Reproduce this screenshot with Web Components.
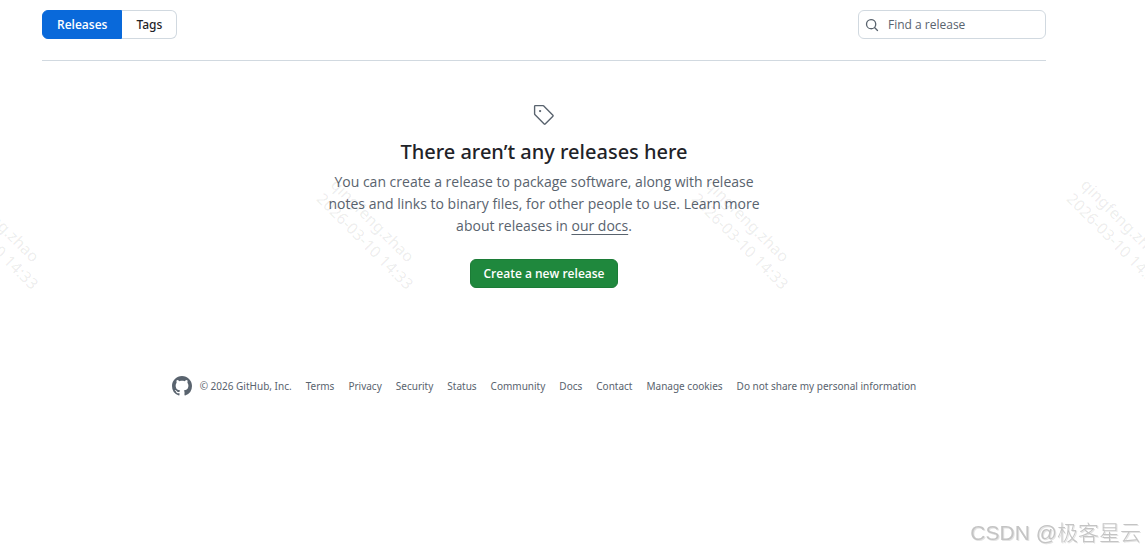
<!DOCTYPE html>
<html lang="en">
<head>
<meta charset="utf-8">
<meta name="viewport" content="width=device-width, initial-scale=1">
<title>Releases</title>
<style>
  body {
    --font-medium: "Noto Sans", sans-serif;
    margin: 0;
    background: #fff;
    color: #1f2328;
    font-family: "Open Sans", "Noto Sans", sans-serif;
    font-size: 12px;
  }
</style>
</head>
<body>
<releases-page>
  <releases-toolbar slot="toolbar"></releases-toolbar>
  <blank-slate>
    <span slot="heading">There aren’t any releases here</span>
    You can create a release to package software, along with release notes and links to binary files, for other people to use. Learn more about releases in <a href="#docs">our docs</a>.
    <span slot="action">Create a new release</span>
  </blank-slate>
  <site-footer slot="footer">
    <footer-link href="#terms">Terms</footer-link>
    <footer-link href="#privacy">Privacy</footer-link>
    <footer-link href="#security">Security</footer-link>
    <footer-link href="#status">Status</footer-link>
    <footer-link href="#community">Community</footer-link>
    <footer-link href="#docs">Docs</footer-link>
    <footer-link href="#contact">Contact</footer-link>
    <footer-link href="#cookies">Manage cookies</footer-link>
    <footer-link href="#share">Do not share my personal information</footer-link>
  </site-footer>
</releases-page>
<user-watermark name="qingfeng.zhao" time="2026-03-10 14:33"></user-watermark>
<image-credit>CSDN @极客星云</image-credit>

<script>
class ReleasesPage extends HTMLElement {
  constructor() {
    super();
    this.attachShadow({ mode: 'open' });
    this.shadowRoot.innerHTML = `
      <style>
        :host {
          display: block;
          padding: 10px 99px 0 42px;
        }
      </style>
      <slot name="toolbar"></slot>
      <main><slot></slot></main>
      <slot name="footer"></slot>
    `;
  }
}

class ReleasesToolbar extends HTMLElement {
  constructor() {
    super();
    this.attachShadow({ mode: 'open' });
    this.shadowRoot.innerHTML = `
      <style>
        :host {
          display: flex;
          justify-content: space-between;
          padding-bottom: 21px;
          border-bottom: 1px solid #d1d9e0;
        }
        nav {
          display: flex;
        }
        a {
          box-sizing: border-box;
          height: 29px;
          padding: 0 14px;
          border: 1px solid #d1d9e0;
          border-radius: 0 6px 6px 0;
          border-left: 0;
          color: #1f2328;
          font-family: var(--font-medium);
          font-weight: 500;
          line-height: 27px;
          text-decoration: none;
        }
        a[aria-current] {
          border: 1px solid #0969da;
          border-radius: 6px 0 0 6px;
          background: #0969da;
          color: #fff;
          font-family: inherit;
          font-weight: 600;
        }
        label {
          display: flex;
          align-items: center;
          gap: 9px;
          box-sizing: border-box;
          width: 188px;
          height: 29px;
          padding: 0 6px;
          border: 1px solid #d1d9e0;
          border-radius: 6px;
        }
        svg {
          flex: none;
          fill: #59636e;
        }
        input {
          flex: 1;
          min-width: 0;
          padding: 0;
          border: 0;
          outline: 0;
          background: none;
          color: inherit;
          font: inherit;
        }
        input::placeholder {
          color: #59636e;
          opacity: 1;
        }
      </style>
      <nav aria-label="Releases and tags">
        <a href="#releases" aria-current="page">Releases</a>
        <a href="#tags">Tags</a>
      </nav>
      <label>
        <svg width="14" height="14" viewBox="0 0 16 16" aria-hidden="true">
          <path d="M10.68 11.74a6 6 0 0 1-7.922-8.982 6 6 0 0 1 8.982 7.922l3.04 3.04a.749.749 0 0 1-.326 1.275.749.749 0 0 1-.734-.215ZM11.5 7a4.499 4.499 0 1 0-8.997 0A4.499 4.499 0 0 0 11.5 7Z"/>
        </svg>
        <input type="text" placeholder="Find a release" aria-label="Find a release">
      </label>
    `;
  }
}

class BlankSlate extends HTMLElement {
  constructor() {
    super();
    this.attachShadow({ mode: 'open' });
    this.shadowRoot.innerHTML = `
      <style>
        :host {
          display: flex;
          flex-direction: column;
          align-items: center;
          padding: 43px 28px 88px;
          text-align: center;
        }
        svg {
          fill: #59636e;
        }
        h2 {
          margin: 10px 0 3px;
          font-family: var(--font-medium);
          font-size: 20px;
          font-weight: 500;
          line-height: 32px;
        }
        p {
          max-width: 440px;
          margin: 0 0 22px;
          color: #59636e;
          font-size: 14px;
          line-height: 22px;
        }
        ::slotted(a) {
          color: inherit;
          text-underline-offset: 3px;
        }
        button {
          height: 29px;
          padding: 0 12px;
          border: 1px solid #1c7c37;
          border-radius: 6px;
          background: #1f883d;
          color: #fff;
          font: inherit;
          font-weight: 600;
        }
      </style>
      <svg width="22" height="22" viewBox="0 0 24 24" aria-hidden="true">
        <path d="M7.75 6.5a1.25 1.25 0 1 1 0 2.5 1.25 1.25 0 0 1 0-2.5Z"/>
        <path d="M2.5 1h8.44a1.5 1.5 0 0 1 1.06.44l10.25 10.25a1.5 1.5 0 0 1 0 2.12l-8.44 8.44a1.5 1.5 0 0 1-2.12 0L1.44 12A1.497 1.497 0 0 1 1 10.94V2.5A1.5 1.5 0 0 1 2.5 1Zm0 1.5v8.44l10.25 10.25 8.44-8.44L10.94 2.5Z"/>
      </svg>
      <h2><slot name="heading"></slot></h2>
      <p><slot></slot></p>
      <button type="button"><slot name="action"></slot></button>
    `;
  }
}

class SiteFooter extends HTMLElement {
  constructor() {
    super();
    this.attachShadow({ mode: 'open' });
    this.shadowRoot.innerHTML = `
      <style>
        :host {
          display: block;
          color: #59636e;
          font-family: var(--font-medium);
          font-size: 10px;
        }
        footer {
          display: flex;
          flex-wrap: wrap;
          align-items: center;
          justify-content: center;
          gap: 8px 14px;
          line-height: 20px;
        }
        .owner {
          display: flex;
          align-items: center;
          gap: 8px;
        }
        .owner a {
          display: flex;
        }
        svg {
          fill: #59636e;
        }
      </style>
      <footer>
        <div class="owner">
          <a href="#home" aria-label="GitHub">
            <svg width="20" height="20" viewBox="0 0 16 16" aria-hidden="true">
              <path d="M8 0c4.42 0 8 3.58 8 8a8.013 8.013 0 0 1-5.45 7.59c-.4.08-.55-.17-.55-.38 0-.27.01-1.13.01-2.2 0-.75-.25-1.23-.54-1.48 1.78-.2 3.65-.88 3.65-3.95 0-.88-.31-1.59-.82-2.15.08-.2.36-1.02-.08-2.12 0 0-.67-.22-2.2.82-.64-.18-1.32-.27-2-.27-.68 0-1.36.09-2 .27-1.53-1.03-2.2-.82-2.2-.82-.44 1.1-.16 1.92-.08 2.12-.51.56-.82 1.28-.82 2.15 0 3.06 1.86 3.75 3.64 3.95-.23.2-.44.55-.51 1.07-.46.21-1.61.55-2.33-.66-.15-.24-.6-.83-1.23-.82-.67.01-.27.38.01.53.34.19.73.9.82 1.13.16.45.68 1.31 2.69.94 0 .67.01 1.3.01 1.49 0 .21-.15.45-.55.38A7.995 7.995 0 0 1 0 8c0-4.42 3.58-8 8-8Z"/>
            </svg>
          </a>
          <span>© 2026 GitHub, Inc.</span>
        </div>
        <slot></slot>
      </footer>
    `;
  }
}

class FooterLink extends HTMLElement {
  constructor() {
    super();
    this.attachShadow({ mode: 'open' });
  }

  connectedCallback() {
    this.shadowRoot.innerHTML = `
      <style>
        :host {
          display: block;
        }
        a {
          color: inherit;
          text-decoration: none;
        }
      </style>
      <a href="${this.getAttribute('href')}"><slot></slot></a>
    `;
  }
}

/* Diagonal name and time, repeated across the window */
class UserWatermark extends HTMLElement {
  constructor() {
    super();
    this.attachShadow({ mode: 'open' });
  }

  connectedCallback() {
    const tile = `
      <div class="tile">
        <div class="mark">${this.getAttribute('name')}<br>${this.getAttribute('time')}</div>
      </div>
    `;
    const count = Math.ceil(window.innerWidth / 375) + 1;

    this.shadowRoot.innerHTML = `
      <style>
        :host {
          position: absolute;
          top: 0;
          left: 0;
          right: 0;
          height: 468px;
          overflow: hidden;
          pointer-events: none;
        }
        .row {
          display: flex;
          height: 100%;
          margin-left: -190px;
        }
        .tile {
          display: flex;
          flex: none;
          align-items: center;
          justify-content: center;
          width: 375px;
        }
        .mark {
          color: rgba(0, 0, 0, 0.07);
          font-family: var(--font-medium);
          font-size: 16px;
          font-weight: 500;
          line-height: 20px;
          white-space: nowrap;
          transform: rotate(45deg);
        }
      </style>
      <div class="row" aria-hidden="true">${tile.repeat(count)}</div>
    `;
  }
}

class ImageCredit extends HTMLElement {
  constructor() {
    super();
    this.attachShadow({ mode: 'open' });
    this.shadowRoot.innerHTML = `
      <style>
        :host {
          position: fixed;
          right: 4px;
          bottom: 5px;
          color: #c4c4c4;
          font-family: "Liberation Sans", "Noto Sans CJK SC", sans-serif;
          font-size: 21px;
          font-weight: 300;
          line-height: 30px;
          text-shadow: 1px 1px 0 #e4e4e4;
        }
      </style>
      <slot></slot>
    `;
  }
}

customElements.define('releases-page', ReleasesPage);
customElements.define('releases-toolbar', ReleasesToolbar);
customElements.define('blank-slate', BlankSlate);
customElements.define('site-footer', SiteFooter);
customElements.define('footer-link', FooterLink);
customElements.define('user-watermark', UserWatermark);
customElements.define('image-credit', ImageCredit);
</script>
</body>
</html>
